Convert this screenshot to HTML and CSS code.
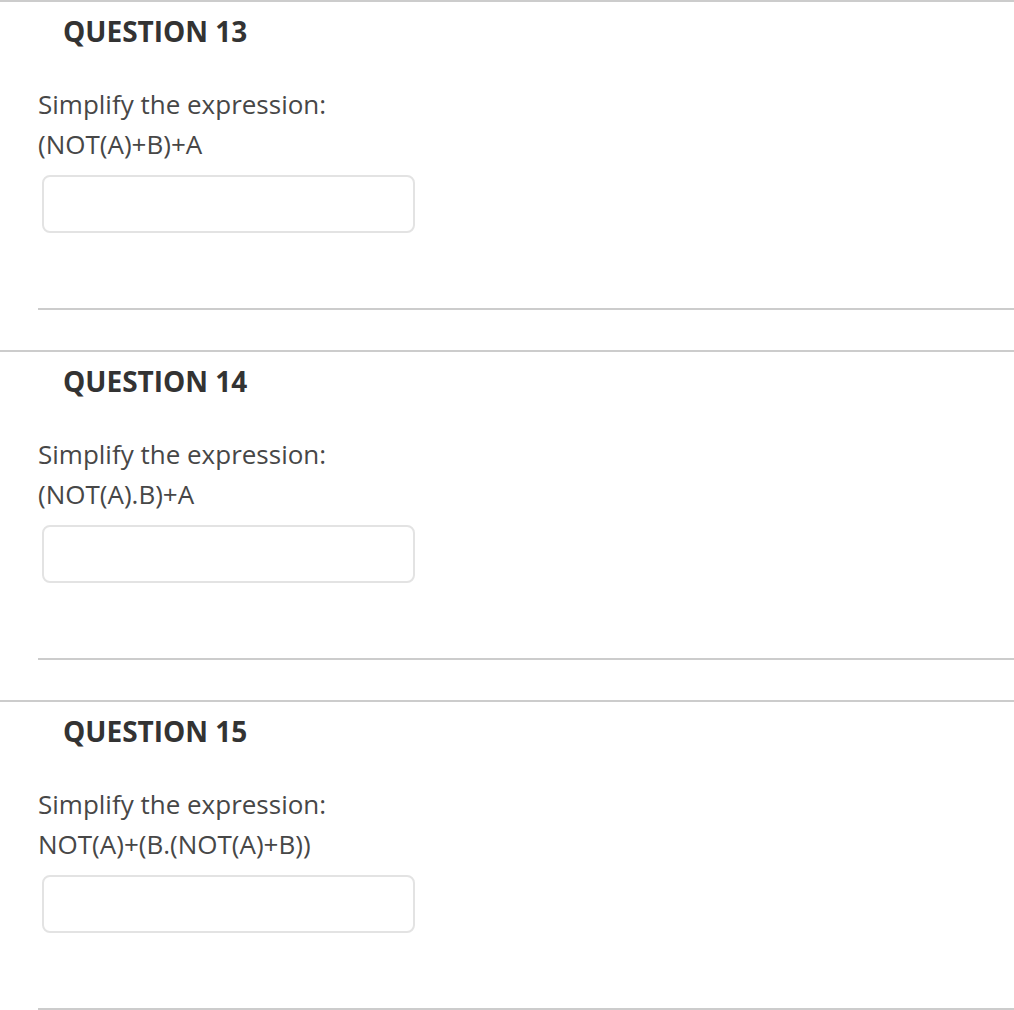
FILE: index.html
```html
<!DOCTYPE html>
<html>
<head>
<meta charset="utf-8">
<link rel="stylesheet" href="styles.css">
</head>
<body>
<section class="question">
  <h2 class="q-title">QUESTION 13</h2>
  <div class="prompt">
    <p>Simplify the expression:</p>
    <p>(NOT(A)+B)+A</p>
  </div>
  <input class="answer" type="text">
  <div class="sep"></div>
</section>
<section class="question">
  <h2 class="q-title">QUESTION 14</h2>
  <div class="prompt">
    <p>Simplify the expression:</p>
    <p>(NOT(A).B)+A</p>
  </div>
  <input class="answer" type="text">
  <div class="sep"></div>
</section>
<section class="question">
  <h2 class="q-title">QUESTION 15</h2>
  <div class="prompt">
    <p>Simplify the expression:</p>
    <p>NOT(A)+(B.(NOT(A)+B))</p>
  </div>
  <input class="answer" type="text">
  <div class="sep"></div>
</section>
</body>
</html>
```
FILE: styles.css
```css
html, body {
  margin: 0;
  padding: 0;
  background: #fff;
}
body {
  font-family: "Open Sans", "Liberation Sans", sans-serif;
  overflow: hidden;
}
.question {
  border-top: 2px solid #cccccc;
  padding-left: 38px;
}
.question + .question {
  margin-top: 40px;
}
.q-title {
  margin: 9px 0 0 25px;
  font-size: 28px;
  line-height: 40px;
  font-weight: 700;
  color: #333333;
}
.prompt {
  margin-top: 33px;
  color: #474747;
  font-size: 26px;
  line-height: 40px;
}
.prompt p {
  margin: 0;
}
.answer {
  display: block;
  box-sizing: border-box;
  margin: 11px 0 0 4px;
  width: 373px;
  height: 58px;
  border: 2px solid #e3e3e3;
  border-radius: 8px;
  background: #fff;
  outline: none;
  padding: 0 12px;
  font: inherit;
}
.sep {
  margin-top: 75px;
  height: 2px;
  background: #cccccc;
}
```
